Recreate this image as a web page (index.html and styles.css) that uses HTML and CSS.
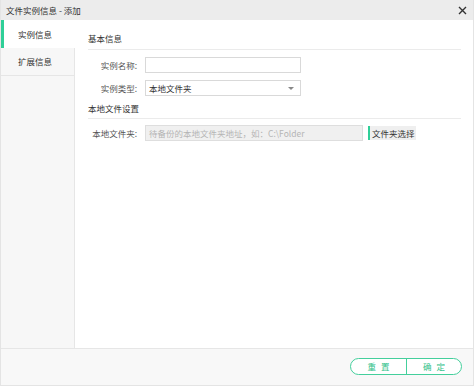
FILE: index.html
```html
<!doctype html>
<html lang="zh-CN">
  <head>
    <meta charset="utf-8" />
    <meta name="viewport" content="width=device-width, initial-scale=1" />
    <title>文件实例信息 - 添加</title>
    <link rel="stylesheet" href="styles.css">
  </head>
  <body>
    <div class="window">
      <div class="titlebar">
        <span class="title">文件实例信息 - 添加</span>
        <svg class="close" width="9" height="9" viewBox="0 0 9 9">
          <path d="M1 1 L8 8 M8 1 L1 8" stroke="#333" stroke-width="1.4" fill="none" />
        </svg>
      </div>
      <div class="main">
        <div class="sidebar">
          <div class="tab active">实例信息</div>
          <div class="tab">扩展信息</div>
        </div>
        <div class="content">
          <div class="section first">基本信息</div>
          <div class="row">
            <label class="label">实例名称:</label>
            <div class="input"></div>
          </div>
          <div class="row">
            <label class="label">实例类型:</label>
            <div class="input select">
              <span>本地文件夹</span>
              <span class="arrow"></span>
            </div>
          </div>
          <div class="section">本地文件设置</div>
          <div class="row folder">
            <label class="label">本地文件夹:</label>
            <div class="input wide disabled">待备份的本地文件夹地址，如：C:\Folder</div>
            <button class="pick" type="button">文件夹选择</button>
          </div>
        </div>
      </div>
      <div class="footer">
        <div class="actions">
          <button class="act" type="button">重置</button>
          <button class="act" type="button">确定</button>
        </div>
      </div>
    </div>
  </body>
</html>
```

FILE: styles.css
```css
body {
  margin: 0;
  font-family: "Noto Sans CJK SC", "Noto Sans", sans-serif;
  font-size: 8.5px;
  color: #333;
  background: #fff;
}
.window {
  width: 474px;
  height: 386px;
  display: flex;
  flex-direction: column;
  box-sizing: border-box;
  border: 1px solid #e4e4e4;
  border-top: none;
}
.titlebar {
  height: 20px;
  flex: none;
  display: flex;
  align-items: center;
  justify-content: space-between;
  padding: 0 6px 0 5px;
  background: #ececec;
  color: #333;
}
.close {
  display: block;
}
.main {
  flex: 1;
  display: flex;
  min-height: 0;
}
.sidebar {
  width: 73px;
  flex: none;
  background: #f7f7f7;
  border-right: 1px solid #e6e6e6;
}
.tab {
  height: 27px;
  line-height: 27px;
  padding-left: 17px;
  border-bottom: 1px solid #e6e6e6;
  color: #333;
}
.tab.active {
  background: #fff;
  border-left: 3px solid #2fcf98;
  padding-left: 14px;
  border-bottom: none;
  height: 28px;
  line-height: 28px;
  margin-right: -1px;
}
.content {
  flex: 1;
  padding: 0 12px 0 13px;
}
.section {
  padding: 4px 0 2px;
  line-height: 16px;
  border-bottom: 1px solid #ebebeb;
  color: #333;
}
.section.first {
  padding-top: 10px;
  padding-bottom: 3px;
}
.row {
  display: flex;
  align-items: center;
  margin-top: 7px;
  height: 16px;
}
.row.folder {
  margin-top: 6px;
}
.label {
  width: 49px;
  padding-right: 3px;
  text-align: right;
  margin-right: 5px;
  color: #555;
  white-space: nowrap;
}
.input {
  width: 156px;
  height: 16px;
  box-sizing: border-box;
  border: 1px solid #d9d9d9;
  background: #fff;
  display: flex;
  align-items: center;
  justify-content: space-between;
  padding: 0 4px 0 3px;
  white-space: nowrap;
}
.arrow {
  width: 0;
  height: 0;
  border-left: 3px solid transparent;
  border-right: 3px solid transparent;
  border-top: 3px solid #888;
  margin-right: 2px;
}
.input.wide {
  width: 218px;
}
.input.disabled {
  background: #f0f0f0;
  color: #b5b5b5;
  border-color: #dedede;
}
.pick {
  margin-left: 5px;
  height: 14px;
  padding: 0 1px 0 2px;
  border: none;
  border-left: 2px solid #2fcf98;
  background: #efefef;
  font: inherit;
  color: #333;
}
.footer {
  height: 36px;
  flex: none;
  border-top: 1px solid #e6e6e6;
  background: #f8f8f8;
  display: flex;
  align-items: center;
  justify-content: flex-end;
  padding-right: 11px;
}
.actions {
  display: flex;
  height: 17px;
  box-sizing: border-box;
  border: 1px solid #44cf9c;
  border-radius: 9px;
  background: #fff;
  margin-top: -2px;
}
.act {
  width: 55px;
  border: none;
  background: none;
  font: inherit;
  letter-spacing: 5px;
  text-indent: 5px;
  color: #2fbf8a;
  padding: 0;
}
.act + .act {
  border-left: 1px solid #44cf9c;
}
```
